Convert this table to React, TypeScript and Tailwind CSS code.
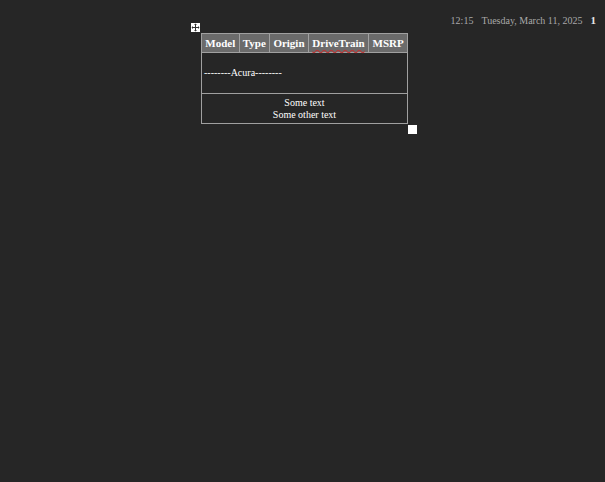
import React from "react";

const headers = ["Model", "Type", "Origin", "DriveTrain", "MSRP"];

function MoveHandle() {
  return (
    <div className="absolute -left-[10px] -top-[10px] flex h-[9px] w-[9px] items-center justify-center bg-white">
      <svg width="9" height="9" viewBox="0 0 9 9">
        <path d="M4.5 1v7M1 4.5h7" stroke="#333" strokeWidth="1" />
        <path d="M4.5 0.5l-1.5 1.5h3zM4.5 8.5l-1.5-1.5h3zM0.5 4.5l1.5-1.5v3zM8.5 4.5l-1.5-1.5v3z" fill="#333" />
      </svg>
    </div>
  );
}

export default function App() {
  return (
    <div className="min-h-[482px] w-[605px] bg-[#262626] font-['Liberation_Serif',serif]">
      {/* Header: time and date */}
      <div className="flex items-baseline justify-end pr-[9px] pt-[14px] text-[10px] leading-[12px] text-[#a8a8a8]">
        <span>12:15</span>
        <span className="ml-[8px]">Tuesday, March 11, 2025</span>
        <span className="ml-[8px] text-[11px] font-bold text-[#e6e6e6]">1</span>
      </div>

      <div className="relative ml-[201px] mt-[6px] w-[207px]">
        <MoveHandle />
        <table className="w-full border-collapse border border-[#8c8c8c] text-white">
          <thead>
            <tr className="h-[19px] bg-[#6b6b6b]">
              {headers.map((h) => (
                <th
                  key={h}
                  className="border border-[#a0a0a0] px-[3px] py-0 text-[11px] font-bold leading-[13px]"
                >
                  {h === "DriveTrain" ? (
                    <span className="underline decoration-wavy decoration-[#c03030] underline-offset-[2px]">
                      {h}
                    </span>
                  ) : (
                    h
                  )}
                </th>
              ))}
            </tr>
          </thead>
          <tbody>
            <tr className="h-[41px]">
              <td
                colSpan={5}
                className="border border-[#a0a0a0] px-[2px] text-left text-[10px] leading-[12px]"
              >
                --------Acura--------
              </td>
            </tr>
            <tr className="h-[30px]">
              <td
                colSpan={5}
                className="border border-[#a0a0a0] text-center text-[10px] leading-[11.5px]"
              >
                Some text
                <br />
                Some other text
              </td>
            </tr>
          </tbody>
        </table>
        <div className="absolute -right-[9px] -bottom-[10px] h-[9px] w-[9px] bg-white" />
      </div>
    </div>
  );
}
